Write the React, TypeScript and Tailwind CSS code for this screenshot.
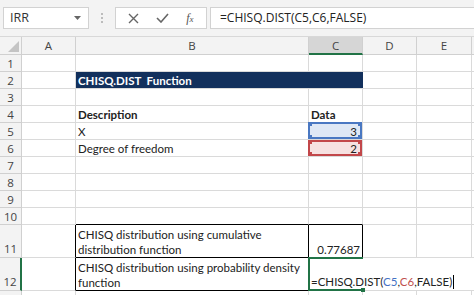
import type { ReactNode } from "react";

const grid = "shrink-0 border-r border-b border-[#dadada] flex items-end px-[2px] overflow-visible whitespace-nowrap";
const rowHead =
  "w-[22px] shrink-0 border-r border-b border-[#d0d0d0] bg-[#f3f3f3] flex items-center justify-center text-[11.5px] text-[#444]";

const Corners = ({ color }: { color: string }) => (
  <>
    <span className={`absolute -left-[2px] -top-[2px] h-[4px] w-[4px] ${color}`} />
    <span className={`absolute -right-[2px] -top-[2px] h-[4px] w-[4px] ${color}`} />
    <span className={`absolute -left-[2px] -bottom-[2px] h-[4px] w-[4px] ${color}`} />
    <span className={`absolute -right-[2px] -bottom-[2px] h-[4px] w-[4px] ${color}`} />
  </>
);

const Row = ({
  n,
  h = "h-[17px]",
  head = "",
  children,
}: {
  n: number | string;
  h?: string;
  head?: string;
  children: ReactNode;
}) => (
  <div className={`flex ${h}`}>
    <div className={`${rowHead} ${head}`} style={{ fontFamily: '"Open Sans", sans-serif' }}>
      {n}
    </div>
    {children}
  </div>
);

const Blank = ({ a = "", b = "", c = "" }: { a?: string; b?: string; c?: string }) => (
  <>
    <div className={`${grid} w-[54px] ${a}`} />
    <div className={`${grid} w-[233px] ${b}`} />
    <div className={`${grid} w-[54px] ${c}`} />
    <div className={`${grid} w-[54px]`} />
    <div className={`${grid} w-[55px]`} />
    <div className={`${grid} flex-1`} />
  </>
);

export default function App() {
  return (
    <div className="h-[295px] w-[474px] overflow-hidden bg-white text-[#222]">
      {/* formula bar */}
      <div
        className="flex h-[37px] items-center border-b border-[#d8d8d8] bg-[#f3f3f3] pl-[3px]"
        style={{ fontFamily: '"Open Sans", sans-serif' }}
      >
        <div className="flex h-[22px] w-[86px] items-center justify-between border border-[#d2d2d2] bg-white pl-[6px] pr-[7px] text-[12.5px] text-[#333]">
          <span>IRR</span>
          <svg width="7" height="4" viewBox="0 0 7 4">
            <path d="M0 0h7L3.5 4z" fill="#666" />
          </svg>
        </div>
        <div className="flex w-[26px] flex-col items-center gap-[2px]">
          <span className="h-[2px] w-[2px] rounded-full bg-[#aaa]" />
          <span className="h-[2px] w-[2px] rounded-full bg-[#aaa]" />
          <span className="h-[2px] w-[2px] rounded-full bg-[#aaa]" />
        </div>
        <div className="flex h-[22px] w-[92px] items-center justify-around border border-[#d2d2d2] bg-white px-[4px]">
          <svg width="11" height="11" viewBox="0 0 11 11">
            <path d="M1 1l9 9M10 1l-9 9" stroke="#666" strokeWidth="1.4" />
          </svg>
          <svg width="13" height="10" viewBox="0 0 13 10">
            <path d="M1 5l4 4 7-8" stroke="#666" strokeWidth="1.6" fill="none" />
          </svg>
          <span className="text-[12px] italic text-[#555]" style={{ fontFamily: '"Liberation Serif", serif' }}>
            f<span className="text-[9px]">x</span>
          </span>
        </div>
        <div className="ml-[3px] flex h-[22px] flex-1 items-center border border-r-0 border-[#d2d2d2] bg-white pl-[9px] text-[12px] text-[#222]">
          =CHISQ.DIST(C5,C6,FALSE)
        </div>
      </div>

      <div style={{ fontFamily: "Lato, sans-serif" }} className="text-[11.5px] leading-[15px]">
        {/* column headers */}
        <div className="flex h-[18px] text-[11.5px] text-[#444]" style={{ fontFamily: '"Open Sans", sans-serif' }}>
          <div className="relative w-[22px] shrink-0 border-r border-b border-[#d0d0d0] bg-[#f3f3f3]">
            <svg className="absolute bottom-[2px] right-[2px]" width="11" height="11" viewBox="0 0 11 11">
              <path d="M11 0v11H0z" fill="#c4c4c4" />
            </svg>
          </div>
          <div className="flex w-[54px] shrink-0 items-center justify-center border-r border-b border-[#d0d0d0] bg-[#f3f3f3]">A</div>
          <div className="flex w-[233px] shrink-0 items-center justify-center border-r border-b border-[#d0d0d0] bg-[#f3f3f3]">B</div>
          <div className="flex w-[54px] shrink-0 items-center justify-center border-r border-b-2 border-b-[#217346] border-r-[#d0d0d0] bg-[#d6d6d6]">C</div>
          <div className="flex w-[54px] shrink-0 items-center justify-center border-r border-b border-[#d0d0d0] bg-[#f3f3f3]">D</div>
          <div className="flex w-[55px] shrink-0 items-center justify-center border-r border-b border-[#d0d0d0] bg-[#f3f3f3]">E</div>
          <div className="flex-1 border-b border-[#d0d0d0] bg-[#f3f3f3]" />
        </div>

        <Row n={1}>
          <Blank />
        </Row>

        <Row n={2}>
          <div className={`${grid} w-[54px]`} />
          <div className="flex w-[287px] shrink-0 items-end border-b border-[#dadada] bg-[#12305c] px-[2px] font-bold text-white">
            CHISQ.DIST&nbsp;&nbsp;Function
          </div>
          <div className={`${grid} w-[54px]`} />
          <div className={`${grid} w-[55px]`} />
          <div className={`${grid} flex-1`} />
        </Row>

        <Row n={3}>
          <Blank />
        </Row>

        <Row n={4}>
          <div className={`${grid} w-[54px]`} />
          <div className={`${grid} w-[233px] font-bold`}>Description</div>
          <div className={`${grid} w-[54px] font-bold`}>Data</div>
          <div className={`${grid} w-[54px]`} />
          <div className={`${grid} w-[55px]`} />
          <div className={`${grid} flex-1`} />
        </Row>

        <Row n={5}>
          <div className={`${grid} w-[54px]`} />
          <div className={`${grid} w-[233px]`}>X</div>
          <div className={`${grid} relative w-[54px] justify-end bg-[#dfe8f5] pr-[5px]`}>
            <span className="absolute -left-[1px] -top-[1px] bottom-0 right-0 border-2 border-[#4a78c2]">
              <Corners color="bg-[#4a78c2]" />
            </span>
            3
          </div>
          <div className={`${grid} w-[54px]`} />
          <div className={`${grid} w-[55px]`} />
          <div className={`${grid} flex-1`} />
        </Row>

        <Row n={6}>
          <div className={`${grid} w-[54px]`} />
          <div className={`${grid} w-[233px]`}>Degree of freedom</div>
          <div className={`${grid} relative w-[54px] justify-end bg-[#f6e1e1] pr-[5px]`}>
            <span className="absolute -left-[1px] top-0 bottom-0 right-0 border-2 border-[#c2474a]">
              <Corners color="bg-[#c2474a]" />
            </span>
            2
          </div>
          <div className={`${grid} w-[54px]`} />
          <div className={`${grid} w-[55px]`} />
          <div className={`${grid} flex-1`} />
        </Row>

        <Row n={7}>
          <Blank />
        </Row>
        <Row n={8}>
          <Blank />
        </Row>
        <Row n={9}>
          <Blank />
        </Row>
        <Row n={10} head="bg-[#e9edf1]">
          <Blank b="border-b-black" c="border-b-black" />
        </Row>

        <Row n={11} h="h-[33px]" head="items-end pb-[1px] bg-[#e4e4e4]">
          <div className={`${grid} w-[54px] border-r-black`} />
          <div className={`${grid} w-[233px] border-r-black border-b-black whitespace-normal`}>
            CHISQ distribution using cumulative
            <br />
            distribution function
          </div>
          <div className={`${grid} w-[54px] justify-end border-r-black border-b-black`}>0.77687</div>
          <div className={`${grid} w-[54px]`} />
          <div className={`${grid} w-[55px]`} />
          <div className={`${grid} flex-1`} />
        </Row>

        <Row n={12} h="h-[33px]" head="items-end pb-[1px] bg-[#d4d4d4] text-[#2f6b4c] border-r-2 border-r-[#217346]">
          <div className={`${grid} w-[54px] border-r-black`} />
          <div className={`${grid} w-[233px] border-r-black border-b-black whitespace-normal`}>
            CHISQ distribution using probability density
            <br />
            function
          </div>
          <div className="relative flex w-[163px] shrink-0 items-end border-b border-[#dadada] bg-white px-[2px] pb-[1px]">
            <span className="absolute -left-[1px] -top-[1px] -bottom-[1px] w-[55px] border-2 border-r-0 border-[#217346]" />
            <span className="absolute left-[52px] -bottom-[2px] h-[4px] w-[4px] bg-[#217346]" />
            <span className="relative">
              =CHISQ.DIST(<span className="text-[#4472c4]">C5</span>,<span className="text-[#c0504d]">C6</span>,FALSE)
            </span>
            <span className="relative ml-[1px] h-[14px] w-[1px] bg-black" />
          </div>
          <div className={`${grid} flex-1`} />
        </Row>

        <Row n="">
          <Blank />
        </Row>
      </div>
    </div>
  );
}
